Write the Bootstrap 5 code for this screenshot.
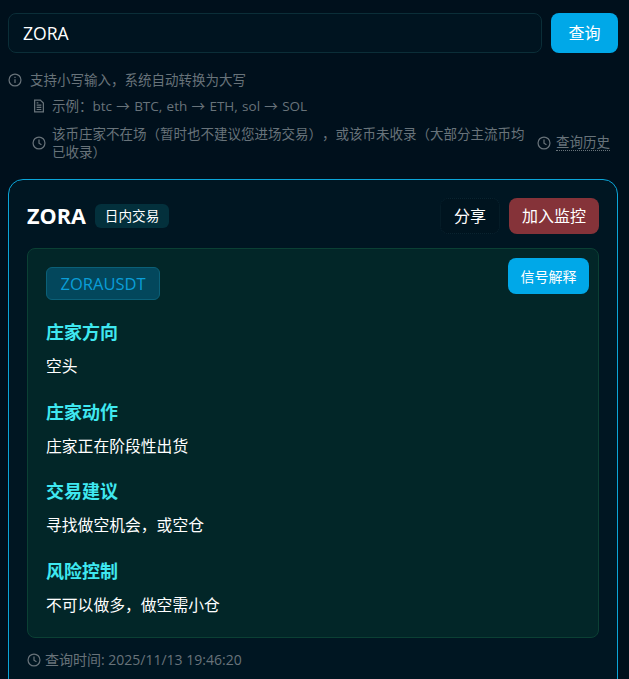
<!DOCTYPE html>
<html lang="zh-CN">
<head>
    <meta charset="UTF-8">
    <meta name="viewport" content="width=device-width, initial-scale=1.0">
    <title>ZORA 查询</title>
    <link href="https://cdn.jsdelivr.net/npm/bootstrap@5.3.0/dist/css/bootstrap.min.css" rel="stylesheet">
    <style>
        html, body { height: 100%; overflow: hidden; }
        body {
            background-color: #00101c;
            color: #fff;
            font-family: "Open Sans", "Noto Sans CJK SC", sans-serif;
            font-size: 14px;
            text-spacing-trim: space-all;
        }
        .page-wrap { padding: 13px 11px 0 8px; }
        .search-row { gap: 9px; }
        .search-input {
            height: 40px;
            padding: 0 14px;
            font-size: 17.6px;
            color: #fff;
            background-color: #001420;
            border: 1px solid #0b2e38;
            border-radius: 8px;
        }
        .search-input:focus { color: #fff; background-color: #001420; border-color: #0b2e38; box-shadow: none; }
        .btn-query {
            flex: none;
            width: 67px;
            height: 40px;
            padding: 0;
            font-size: 16px;
            color: #fff;
            background-color: #00a8e8;
            border: 0;
            border-radius: 8px;
        }
        .hint-area { margin-top: 17px; color: #68737a; font-size: 13.5px; line-height: 18px; }
        .hint-area svg { flex: none; color: #68737a; }
        .hint-one { gap: 8px; height: 20px; }
        .hint-two { gap: 6px; height: 20px; margin-top: 6px; padding-left: 24px; word-spacing: 0.8px; }
        .hint-three { margin-top: 9px; padding-left: 24px; }
        .hint-three .hint-text { width: 478px; margin-left: 6px; }
        .history-link { gap: 5px; margin-left: auto; margin-right: 8px; white-space: nowrap; }
        .history-link span { border-bottom: 1px dotted #68737a; line-height: 15px; }
        .result-box {
            margin-top: 18px;
            height: 560px;
            padding: 18px;
            background-color: #001622;
            border: 1px solid #0ba5d8;
            border-radius: 15px;
        }
        .coin-name { font-size: 21.6px; font-weight: 700; line-height: 36px; }
        .tag-type {
            margin-left: 9px;
            padding: 0 10px;
            height: 24px;
            line-height: 24px;
            font-size: 13.6px;
            background-color: #03303c;
            border-radius: 6px;
        }
        .btn-share, .btn-watch {
            flex: none;
            height: 36px;
            padding: 0;
            font-size: 16px;
            color: #fff;
            border-radius: 8px;
        }
        .btn-share { width: 60px; background-color: #00141f; border: 1px dotted #0a2430; }
        .btn-watch { width: 90px; margin-left: 9px; background-color: #853339; border: 0; }
        .signal-panel {
            position: relative;
            margin-top: 14px;
            height: 390px;
            padding: 18px;
            background-color: #022628;
            border: 1px solid #0b4034;
            border-radius: 8px;
        }
        .btn-explain {
            position: absolute;
            top: 9px;
            right: 9px;
            width: 81px;
            height: 36px;
            padding: 0;
            font-size: 14px;
            color: #fff;
            background-color: #00a8e8;
            border: 0;
            border-radius: 8px;
        }
        .pair-tag {
            display: inline-block;
            height: 33px;
            padding: 0 13.5px;
            line-height: 31px;
            font-size: 16.5px;
            color: #0a9ed8;
            background-color: #03475c;
            border: 1px solid #0b6078;
            border-radius: 6px;
        }
        .signal-title { margin: 0; font-size: 18px; font-weight: 700; line-height: 26px; color: #3fe8f0; }
        .signal-text { margin: 9px 0 0; font-size: 15.8px; line-height: 24px; color: #fff; }
        .signal-block { margin-top: 20.5px; }
        .signal-block.first-block { margin-top: 19px; }
        .query-time { gap: 4px; margin-top: 12px; color: #68737a; font-size: 14px; line-height: 20px; }
    </style>
</head>
<body>
    <div class="page-wrap">
        <div class="d-flex search-row">
            <input type="text" class="form-control search-input flex-grow-1" value="ZORA">
            <button class="btn btn-query" type="button">查询</button>
        </div>

        <div class="hint-area">
            <div class="d-flex align-items-center hint-one">
                <svg width="14" height="14" viewBox="0 0 16 16" fill="none" stroke="currentColor" stroke-width="1.4"><circle cx="8" cy="8" r="6.8"/><path d="M8 7v4.5M8 4.3v1.3"/></svg>
                <span>支持小写输入，系统自动转换为大写</span>
            </div>
            <div class="d-flex align-items-center hint-two">
                <svg width="14" height="14" viewBox="0 0 16 16" fill="none" stroke="currentColor" stroke-width="1.4"><path d="M3 1.2h6.5L13 4.7v10.1H3zM5.3 7h5.4M5.3 9.5h5.4M5.3 12h5.4M5.3 4.5h2"/></svg>
                <span>示例：btc → BTC, eth → ETH, sol → SOL</span>
            </div>
            <div class="d-flex align-items-center hint-three">
                <svg width="14" height="14" viewBox="0 0 16 16" fill="none" stroke="currentColor" stroke-width="1.4"><circle cx="8" cy="8" r="6.8"/><path d="M8 4v4.3l2.8 1.6"/></svg>
                <span class="hint-text">该币庄家不在场（暂时也不建议您进场交易），或该币未收录（大部分主流币均已收录）</span>
                <span class="d-flex align-items-center history-link">
                    <svg width="14" height="14" viewBox="0 0 16 16" fill="none" stroke="currentColor" stroke-width="1.4"><circle cx="8" cy="8" r="6.8"/><path d="M8 4v4.3l2.8 1.6"/></svg>
                    <span>查询历史</span>
                </span>
            </div>
        </div>

        <div class="result-box">
            <div class="d-flex align-items-center justify-content-between">
                <div class="d-flex align-items-center">
                    <span class="coin-name">ZORA</span>
                    <span class="tag-type">日内交易</span>
                </div>
                <div class="d-flex">
                    <button class="btn btn-share" type="button">分享</button>
                    <button class="btn btn-watch" type="button">加入监控</button>
                </div>
            </div>

            <div class="signal-panel">
                <button class="btn btn-explain" type="button">信号解释</button>
                <span class="pair-tag">ZORAUSDT</span>
                <div class="signal-block first-block">
                    <h5 class="signal-title">庄家方向</h5>
                    <p class="signal-text">空头</p>
                </div>
                <div class="signal-block">
                    <h5 class="signal-title">庄家动作</h5>
                    <p class="signal-text">庄家正在阶段性出货</p>
                </div>
                <div class="signal-block">
                    <h5 class="signal-title">交易建议</h5>
                    <p class="signal-text">寻找做空机会，或空仓</p>
                </div>
                <div class="signal-block">
                    <h5 class="signal-title">风险控制</h5>
                    <p class="signal-text">不可以做多，做空需小仓</p>
                </div>
            </div>

            <div class="d-flex align-items-center query-time">
                <svg width="14" height="14" viewBox="0 0 16 16" fill="none" stroke="currentColor" stroke-width="1.4"><circle cx="8" cy="8" r="6.8"/><path d="M8 4v4.3l2.8 1.6"/></svg>
                <span>查询时间: 2025/11/13 19:46:20</span>
            </div>
        </div>
    </div>
    <script src="https://cdn.jsdelivr.net/npm/bootstrap@5.3.0/dist/js/bootstrap.bundle.min.js"></script>
</body>
</html>
